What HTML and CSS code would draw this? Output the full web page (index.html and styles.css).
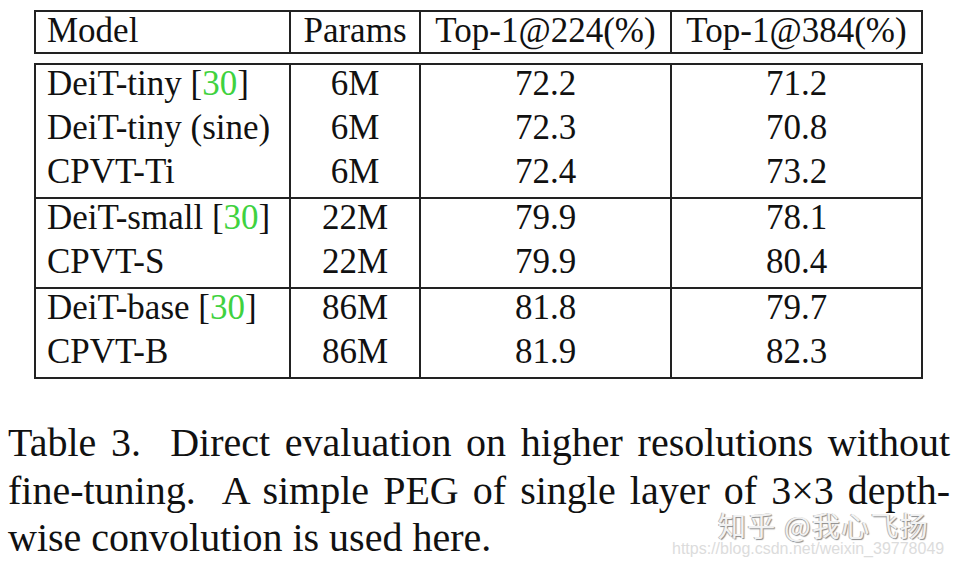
FILE: index.html
```html
<!DOCTYPE html>
<html lang="en">
<head>
    <meta charset="UTF-8">
    <meta name="viewport" content="width=device-width, initial-scale=1.0">
    <title>Table 3</title>
    <link rel="stylesheet" href="styles.css">
</head>
<body>
    <div class="page">
        <div class="tbl">
            <div class="head">
                <div class="cell name">Model</div>
                <div class="cell">Params</div>
                <div class="cell">Top-1@224(%)</div>
                <div class="cell">Top-1@384(%)</div>
            </div>

            <div class="body">
                <div class="group">
                    <div class="cell name">DeiT-tiny [<span class="cite">30</span>]</div>
                    <div class="cell">6M</div>
                    <div class="cell">72.2</div>
                    <div class="cell">71.2</div>

                    <div class="cell name">DeiT-tiny (sine)</div>
                    <div class="cell">6M</div>
                    <div class="cell">72.3</div>
                    <div class="cell">70.8</div>

                    <div class="cell name">CPVT-Ti</div>
                    <div class="cell">6M</div>
                    <div class="cell">72.4</div>
                    <div class="cell">73.2</div>
                </div>
                <div class="group">
                    <div class="cell name">DeiT-small [<span class="cite">30</span>]</div>
                    <div class="cell">22M</div>
                    <div class="cell">79.9</div>
                    <div class="cell">78.1</div>

                    <div class="cell name">CPVT-S</div>
                    <div class="cell">22M</div>
                    <div class="cell">79.9</div>
                    <div class="cell">80.4</div>
                </div>
                <div class="group">
                    <div class="cell name">DeiT-base [<span class="cite">30</span>]</div>
                    <div class="cell">86M</div>
                    <div class="cell">81.8</div>
                    <div class="cell">79.7</div>

                    <div class="cell name">CPVT-B</div>
                    <div class="cell">86M</div>
                    <div class="cell">81.9</div>
                    <div class="cell">82.3</div>
                </div>
            </div>
        </div>

        <p class="caption">Table 3.&nbsp; Direct evaluation on higher resolutions without fine-tuning.&nbsp; A simple PEG of single layer of 3&times;3 depth-wise convolution is used here.</p>

        <!-- watermark -->
        <div class="mark">知乎 @我心飞扬</div>
        <div class="mark-url">https://blog.csdn.net/weixin_39778049</div>
    </div>
</body>
</html>
```

FILE: styles.css
```css
body {
    margin: 0;
    background: #fff;
    color: #111;
    font-family: "Liberation Serif", "Times New Roman", serif;
}
.page {
    position: relative;
    width: 953px;
    height: 567px;
    overflow: hidden;
}
.tbl {
    margin: 10px 0 0 34px;
    width: 889px;
    font-size: 35px;
}
.head,
.group {
    display: grid;
    grid-template-columns: 253px 130px 251px 251px;
}
.head {
    border: 2px solid #222;
}
.body {
    margin-top: 9px;
    border: 2px solid #222;
}
.group + .group {
    border-top: 2px solid #222;
}
.cell {
    box-sizing: border-box;
    text-align: center;
    line-height: 34px;
    padding: 2px 0 8px;
    white-space: nowrap;
    border-left: 2px solid #222;
}
.head .cell {
    padding: 2px 0 4px;
}
.cell.name {
    text-align: left;
    padding-left: 11px;
    border-left: none;
}
.cite {
    color: #3fd23f;
}
.caption {
    margin: 40px 0 0 8px;
    width: 942px;
    font-size: 40px;
    line-height: 47.5px;
    text-align: justify;
    color: #111;
}
.mark {
    position: absolute;
    left: 718px;
    top: 508px;
    font-family: "Noto Sans CJK SC", sans-serif;
    font-size: 28px;
    line-height: 34px;
    color: #f2f2f2;
    text-shadow: 1px 1px 1px #8a8a8a, -1px 0 0 #b8b8b8;
    letter-spacing: 1.3px;
}
.mark-url {
    position: absolute;
    left: 672px;
    top: 539px;
    font-family: "Liberation Sans", Arial, sans-serif;
    font-size: 16px;
    line-height: 20px;
    color: #dcdcdc;
}
```
